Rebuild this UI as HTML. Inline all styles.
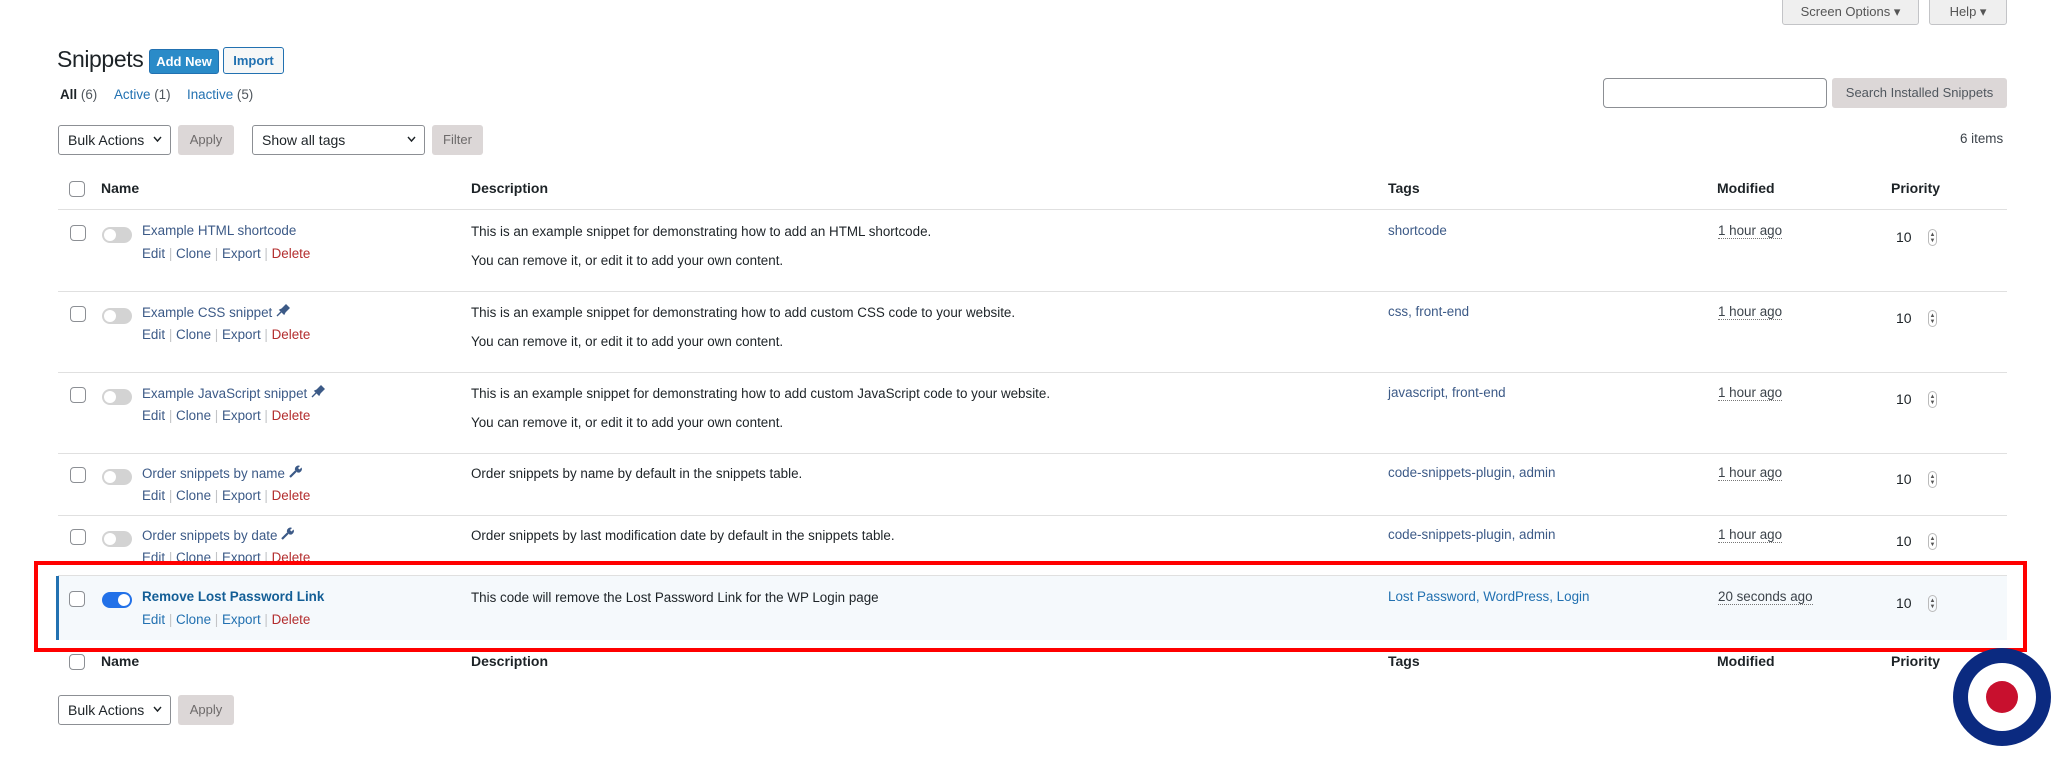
<!DOCTYPE html>
<html><head><meta charset="utf-8">
<style>
*{box-sizing:border-box;margin:0;padding:0}
body{width:2064px;height:758px;background:#fff;font-family:"Liberation Sans",sans-serif;font-size:13.4px;color:#1d2327;position:relative;overflow:hidden}
.a{position:absolute;white-space:nowrap}
.btn{position:absolute;border-radius:3px;text-align:center}
.gray{background:#dcd7d7;color:#6d6a6a;font-size:13px}
.sel{position:absolute;border:1px solid #8c8f94;border-radius:3px;background:#fff;font-size:14px;color:#1d2327;padding-left:9px}
.sel svg{position:absolute;right:8px;top:50%;margin-top:-4px}
.cb{position:absolute;width:16px;height:16px;border:1px solid #8c8f94;border-radius:4px;background:#fff}
.tg{position:absolute;width:30px;height:16px;border-radius:8px;background:#d3d3d3}
.tg::after{content:"";position:absolute;left:2px;top:2px;width:12px;height:12px;border-radius:6px;background:#fff}
.tg.on{background:#2271e8}.tg.on::after{left:16px}
.ln{position:absolute;left:58px;width:1949px;height:1px;background:#e0e0e0}
.lk{color:#3c5a87}
.del{color:#b32d2e}
.sep{color:#c3c4c7}
.th{font-weight:bold;font-size:14px;color:#1d2327}
.mod{border-bottom:1px dotted #777;color:#3c434a}
.sp{position:absolute;width:9px;height:17px;border:1px solid #bbb;border-radius:5px;font-size:6px;line-height:6px;text-align:center;color:#555;padding-top:2px}
</style></head><body>
<div class="btn" style="left:1782px;top:-4px;width:137px;height:29px;background:#efefef;border:1px solid #c3c4c7;color:#555;font-size:13px;line-height:30px">Screen Options ▾</div>
<div class="btn" style="left:1929px;top:-4px;width:78px;height:29px;background:#efefef;border:1px solid #c3c4c7;color:#555;font-size:13px;line-height:30px">Help ▾</div>

<div class="a" style="left:57px;top:46px;font-size:23px;letter-spacing:-0.4px;color:#1d2327">Snippets</div>
<div class="btn" style="left:149px;top:49px;width:70px;height:25px;background:#2a8bc8;border:1px solid #2271b1;color:#fff;font-weight:bold;font-size:13px;line-height:23px">Add New</div>
<div class="btn" style="left:223px;top:47px;width:61px;height:27px;background:#f6f7f7;border:1px solid #2271b1;color:#2271b1;font-weight:bold;font-size:13px;line-height:25px">Import</div>

<div class="a" style="left:60px;top:87px"><span style="color:#1d2327;font-weight:600">All</span> <span style="color:#50575e">(6)</span></div>
<div class="a" style="left:114px;top:87px"><span style="color:#2271b1">Active</span> <span style="color:#50575e">(1)</span></div>
<div class="a" style="left:187px;top:87px"><span style="color:#2271b1">Inactive</span> <span style="color:#50575e">(5)</span></div>

<div class="a" style="left:1603px;top:78px;width:224px;height:30px;border:1px solid #8c8f94;border-radius:4px"></div>
<div class="btn gray" style="left:1832px;top:78px;width:175px;height:30px;line-height:30px;color:#50575e">Search Installed Snippets</div>

<div class="sel" style="left:58px;top:125px;width:113px;height:30px;line-height:28px">Bulk Actions<svg width="9" height="7"><path d="M1 1l3.5 4 3.5-4" stroke="#1d2327" stroke-width="1.4" fill="none"/></svg></div>
<div class="btn gray" style="left:178px;top:125px;width:56px;height:30px;line-height:30px">Apply</div>
<div class="sel" style="left:252px;top:125px;width:173px;height:30px;line-height:28px">Show all tags<svg width="9" height="7"><path d="M1 1l3.5 4 3.5-4" stroke="#1d2327" stroke-width="1.4" fill="none"/></svg></div>
<div class="btn gray" style="left:432px;top:125px;width:51px;height:30px;line-height:30px">Filter</div>
<div class="a" style="left:1960px;top:131px;color:#3c434a">6 items</div>

<div class="cb" style="left:69px;top:181px"></div>
<div class="a th" style="left:101px;top:180px">Name</div>
<div class="a th" style="left:471px;top:180px">Description</div>
<div class="a th" style="left:1388px;top:180px">Tags</div>
<div class="a th" style="left:1717px;top:180px">Modified</div>
<div class="a th" style="left:1891px;top:180px">Priority</div>
<div class="ln" style="top:209px"></div>

<div class="a" style="left:58px;top:576px;width:1949px;height:64px;background:#f5f9fc"></div>
<div class="a" style="left:56px;top:576px;width:3px;height:64px;background:#2271b1"></div>

<div class="cb" style="left:70px;top:225px"></div><div class="tg" style="left:102px;top:227px"></div>
<div class="a lk" style="left:142px;top:223px">Example HTML shortcode</div>
<div class="a" style="left:142px;top:246px"><span class="lk">Edit</span> <span class="sep">|</span> <span class="lk">Clone</span> <span class="sep">|</span> <span class="lk">Export</span> <span class="sep">|</span> <span class="del">Delete</span></div>
<div class="a" style="left:471px;top:224px">This is an example snippet for demonstrating how to add an HTML shortcode.</div>
<div class="a" style="left:471px;top:253px">You can remove it, or edit it to add your own content.</div>
<div class="a lk" style="left:1388px;top:223px">shortcode</div>
<div class="a" style="left:1718px;top:223px"><span class="mod">1 hour ago</span></div>
<div class="a" style="left:1896px;top:229px;font-size:14px">10</div><div class="sp" style="left:1928px;top:229px">▲<br>▼</div>
<div class="ln" style="top:291px"></div>

<div class="cb" style="left:70px;top:306px"></div><div class="tg" style="left:102px;top:308px"></div>
<div class="a lk" style="left:142px;top:304px">Example CSS snippet <svg width="14" height="13" viewBox="0 0 14 13"><path d="M1 12l4-4M4 6l4 4 1-2 4-4-3-3-4 4z" fill="#3c5a87" stroke="#3c5a87" stroke-width="1.4"/></svg></div>
<div class="a" style="left:142px;top:327px"><span class="lk">Edit</span> <span class="sep">|</span> <span class="lk">Clone</span> <span class="sep">|</span> <span class="lk">Export</span> <span class="sep">|</span> <span class="del">Delete</span></div>
<div class="a" style="left:471px;top:305px">This is an example snippet for demonstrating how to add custom CSS code to your website.</div>
<div class="a" style="left:471px;top:334px">You can remove it, or edit it to add your own content.</div>
<div class="a lk" style="left:1388px;top:304px">css, front-end</div>
<div class="a" style="left:1718px;top:304px"><span class="mod">1 hour ago</span></div>
<div class="a" style="left:1896px;top:310px;font-size:14px">10</div><div class="sp" style="left:1928px;top:310px">▲<br>▼</div>
<div class="ln" style="top:372px"></div>

<div class="cb" style="left:70px;top:387px"></div><div class="tg" style="left:102px;top:389px"></div>
<div class="a lk" style="left:142px;top:385px">Example JavaScript snippet <svg width="14" height="13" viewBox="0 0 14 13"><path d="M1 12l4-4M4 6l4 4 1-2 4-4-3-3-4 4z" fill="#3c5a87" stroke="#3c5a87" stroke-width="1.4"/></svg></div>
<div class="a" style="left:142px;top:408px"><span class="lk">Edit</span> <span class="sep">|</span> <span class="lk">Clone</span> <span class="sep">|</span> <span class="lk">Export</span> <span class="sep">|</span> <span class="del">Delete</span></div>
<div class="a" style="left:471px;top:386px">This is an example snippet for demonstrating how to add custom JavaScript code to your website.</div>
<div class="a" style="left:471px;top:415px">You can remove it, or edit it to add your own content.</div>
<div class="a lk" style="left:1388px;top:385px">javascript, front-end</div>
<div class="a" style="left:1718px;top:385px"><span class="mod">1 hour ago</span></div>
<div class="a" style="left:1896px;top:391px;font-size:14px">10</div><div class="sp" style="left:1928px;top:391px">▲<br>▼</div>
<div class="ln" style="top:453px"></div>

<div class="cb" style="left:70px;top:467px"></div><div class="tg" style="left:102px;top:469px"></div>
<div class="a lk" style="left:142px;top:465px">Order snippets by name <svg width="14" height="13" viewBox="0 0 14 13"><path d="M1 12l6-6" stroke="#3c5a87" stroke-width="2.2"/><path d="M6 5a3.5 3.5 0 0 1 5-4l-2 2 1.5 1.5 2-2a3.5 3.5 0 0 1-4 5z" fill="#3c5a87"/></svg></div>
<div class="a" style="left:142px;top:488px"><span class="lk">Edit</span> <span class="sep">|</span> <span class="lk">Clone</span> <span class="sep">|</span> <span class="lk">Export</span> <span class="sep">|</span> <span class="del">Delete</span></div>
<div class="a" style="left:471px;top:466px">Order snippets by name by default in the snippets table.</div>
<div class="a lk" style="left:1388px;top:465px">code-snippets-plugin, admin</div>
<div class="a" style="left:1718px;top:465px"><span class="mod">1 hour ago</span></div>
<div class="a" style="left:1896px;top:471px;font-size:14px">10</div><div class="sp" style="left:1928px;top:471px">▲<br>▼</div>
<div class="ln" style="top:515px"></div>

<div class="cb" style="left:70px;top:529px"></div><div class="tg" style="left:102px;top:531px"></div>
<div class="a lk" style="left:142px;top:527px">Order snippets by date <svg width="14" height="13" viewBox="0 0 14 13"><path d="M1 12l6-6" stroke="#3c5a87" stroke-width="2.2"/><path d="M6 5a3.5 3.5 0 0 1 5-4l-2 2 1.5 1.5 2-2a3.5 3.5 0 0 1-4 5z" fill="#3c5a87"/></svg></div>
<div class="a" style="left:142px;top:550px"><span class="lk">Edit</span> <span class="sep">|</span> <span class="lk">Clone</span> <span class="sep">|</span> <span class="lk">Export</span> <span class="sep">|</span> <span class="del">Delete</span></div>
<div class="a" style="left:471px;top:528px">Order snippets by last modification date by default in the snippets table.</div>
<div class="a lk" style="left:1388px;top:527px">code-snippets-plugin, admin</div>
<div class="a" style="left:1718px;top:527px"><span class="mod">1 hour ago</span></div>
<div class="a" style="left:1896px;top:533px;font-size:14px">10</div><div class="sp" style="left:1928px;top:533px">▲<br>▼</div>
<div class="ln" style="top:575px"></div>

<div class="cb" style="left:69px;top:591px"></div><div class="tg on" style="left:102px;top:592px"></div>
<div class="a" style="left:142px;top:589px;font-weight:bold;color:#135e96">Remove Lost Password Link</div>
<div class="a" style="left:142px;top:612px"><span style="color:#2271b1">Edit</span> <span class="sep">|</span> <span style="color:#2271b1">Clone</span> <span class="sep">|</span> <span style="color:#2271b1">Export</span> <span class="sep">|</span> <span class="del">Delete</span></div>
<div class="a" style="left:471px;top:590px">This code will remove the Lost Password Link for the WP Login page</div>
<div class="a" style="left:1388px;top:589px;color:#2271b1">Lost Password, WordPress, Login</div>
<div class="a" style="left:1718px;top:589px"><span class="mod">20 seconds ago</span></div>
<div class="a" style="left:1896px;top:595px;font-size:14px">10</div><div class="sp" style="left:1928px;top:595px">▲<br>▼</div>

<div class="a" style="left:34px;top:561px;width:1993px;height:91px;border:4px solid #f00"></div>

<div class="cb" style="left:69px;top:654px"></div>
<div class="a th" style="left:101px;top:653px">Name</div>
<div class="a th" style="left:471px;top:653px">Description</div>
<div class="a th" style="left:1388px;top:653px">Tags</div>
<div class="a th" style="left:1717px;top:653px">Modified</div>
<div class="a th" style="left:1891px;top:653px">Priority</div>

<div class="sel" style="left:58px;top:695px;width:113px;height:30px;line-height:28px">Bulk Actions<svg width="9" height="7"><path d="M1 1l3.5 4 3.5-4" stroke="#1d2327" stroke-width="1.4" fill="none"/></svg></div>
<div class="btn gray" style="left:178px;top:695px;width:56px;height:30px;line-height:30px">Apply</div>

<svg class="a" style="left:1952px;top:647px" width="100" height="100"><circle cx="50" cy="50" r="49" fill="#0b2a80"/><circle cx="50" cy="50" r="34" fill="#fff"/><circle cx="50" cy="50" r="16" fill="#c8102e"/></svg>
</body></html>
